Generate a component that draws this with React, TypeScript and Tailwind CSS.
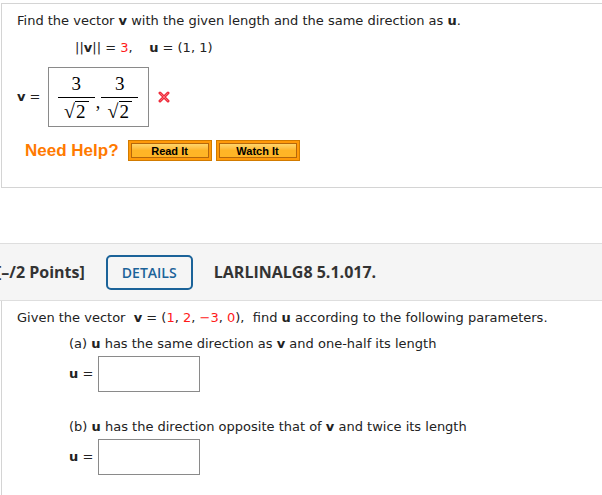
import React from 'react';

const Frac: React.FC = () => (
  <span className="inline-flex flex-col items-center">
    <span className="leading-none text-[19px] pb-[4px]">3</span>
    <span className="h-px w-[37px] bg-black" />
    <span className="flex items-start leading-none text-[19px] pt-[3px]">
      <span className="text-[20px] leading-none">√</span>
      <span className="border-t border-black pl-[1px] pr-[3px] leading-[19px]">2</span>
    </span>
  </span>
);

const OrangeButton: React.FC<{ label: string }> = ({ label }) => (
  <span className="inline-block w-[84px] border border-[#d27b00] bg-[#ff9a0a] p-[2px]">
    <span className="flex h-[15px] items-center justify-center border border-[#b7670a] bg-gradient-to-b from-[#ffd56a] via-[#ffb526] to-[#ffb526] font-['Liberation_Sans',Arial,sans-serif] text-[11px] font-bold text-black">
      {label}
    </span>
  </span>
);

const Red: React.FC<{ children: React.ReactNode }> = ({ children }) => (
  <span className="text-[#ff1a1a]">{children}</span>
);

export default function App() {
  return (
    <div className="w-[602px] h-[495px] overflow-hidden bg-white font-['DejaVu_Sans',Verdana,sans-serif] text-[13px] text-[#222]">
      {/* question 1 */}
      <div className="mt-[3px] h-[185px] border-t border-b border-l border-[#d4d4d4] ml-[1px] pl-[15px] pt-[8px]">
        <div className="leading-[18px]">
          Find the vector <b>v</b> with the given length and the same direction as <b>u</b>.
        </div>
        <div className="mt-[9px] pl-[58px] leading-[18px]">
          ||<b>v</b>|| = <Red>3</Red>,&nbsp;&nbsp;&nbsp; <b>u</b> = (1, 1)
        </div>
        <div className="mt-[10px] flex items-center">
          <span>
            <b>v</b> =
          </span>
          <span className="ml-[7px] flex h-[60px] w-[101px] items-center justify-center border border-[#8a8a8a] font-['Liberation_Serif','Times_New_Roman',serif] text-black">
            <Frac />
            <span className="mx-[1px] mt-[10px] text-[18px]">,</span>
            <Frac />
          </span>
          <svg width="12" height="12" viewBox="0 0 12 12" className="ml-[9px]">
            <path d="M2 2L10 10M10 2L2 10" stroke="#ee2b3a" strokeWidth="3" strokeLinecap="round" />
            <path d="M2.5 2.5L9.5 9.5M9.5 2.5L2.5 9.5" stroke="#ff7a84" strokeWidth="0.8" strokeLinecap="round" />
          </svg>
        </div>
        <div className="mt-[11px] flex items-center pl-[8px]">
          <span className="font-['Liberation_Sans',Arial,sans-serif] text-[17px] font-bold text-[#ff7a00]">
            Need Help?
          </span>
          <span className="ml-[9px] flex gap-[4px]">
            <OrangeButton label="Read It" />
            <OrangeButton label="Watch It" />
          </span>
        </div>
      </div>

      {/* question 2 header */}
      <div className="mt-[55px] flex h-[58px] items-center border-t border-b border-[#dedede] bg-[#f5f5f5] font-['Open_Sans',sans-serif]">
        <span className="ml-[-4px] whitespace-nowrap text-[16px] font-bold text-[#333]">[–/2 Points]</span>
        <span className="ml-[21px] flex h-[35px] w-[87px] items-center justify-center rounded-[5px] border-2 border-[#1b6399] text-[14px] font-semibold text-[#1b6399]">
          DETAILS
        </span>
        <span className="ml-[21px] text-[16px] font-bold text-[#333]">LARLINALG8 5.1.017.</span>
      </div>

      {/* question 2 body */}
      <div className="ml-[1px] h-[200px] border-l border-[#d4d4d4] pl-[15px] pt-[8px]">
        <div className="leading-[18px]">
          Given the vector&nbsp; <b>v</b> = (<Red>1</Red>, <Red>2</Red>, <Red>−3</Red>, <Red>0</Red>),&nbsp; find <b>u</b> according to the following parameters.
        </div>
        <div className="pl-[52px]">
          <div className="mt-[8px] leading-[18px]">
            (a) <b>u</b> has the same direction as <b>v</b> and one-half its length
          </div>
          <div className="mt-[3px] flex items-center">
            <span>
              <b>u</b> =
            </span>
            <span className="ml-[5px] h-[36px] w-[102px] border border-[#8a8a8a]" />
          </div>
          <div className="mt-[26px] leading-[18px]">
            (b) <b>u</b> has the direction opposite that of <b>v</b> and twice its length
          </div>
          <div className="mt-[3px] flex items-center">
            <span>
              <b>u</b> =
            </span>
            <span className="ml-[5px] h-[36px] w-[102px] border border-[#8a8a8a]" />
          </div>
        </div>
      </div>
    </div>
  );
}
